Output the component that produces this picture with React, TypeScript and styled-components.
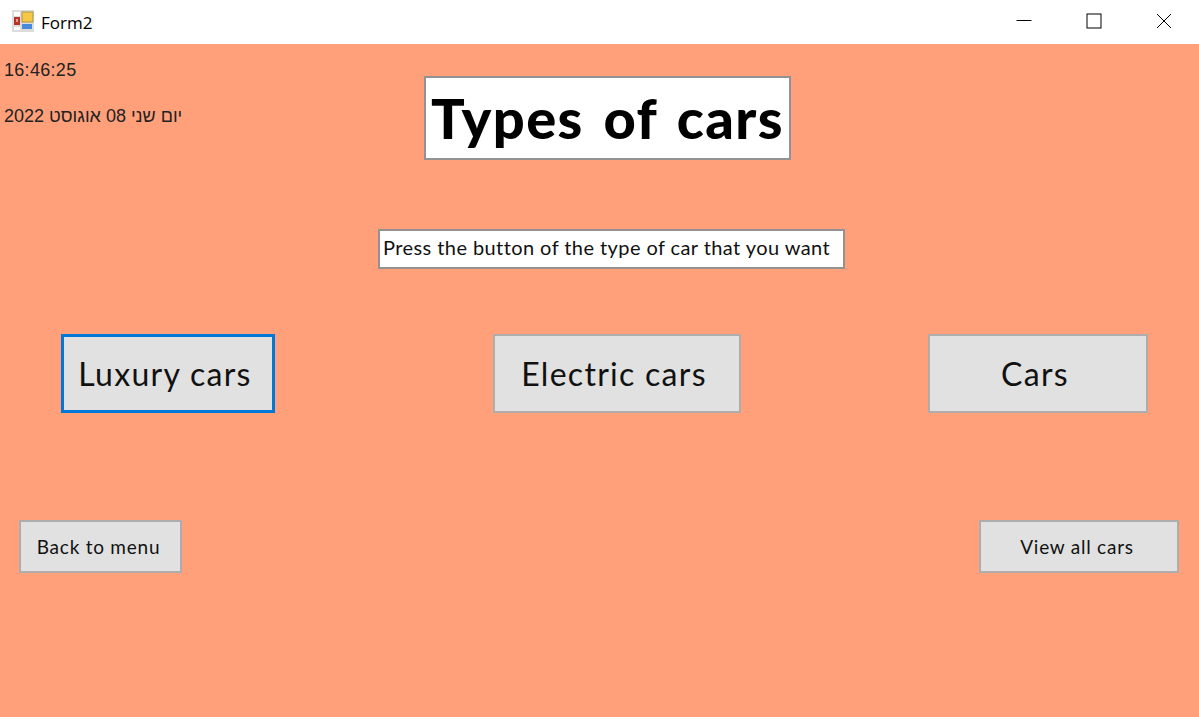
import React from "react";
import styled, { createGlobalStyle } from "styled-components";

const GlobalStyle = createGlobalStyle`
  html, body {
    margin: 0;
    padding: 0;
    background: #ffa07a;
  }
`;

const Window = styled.div`
  width: 1199px;
  height: 717px;
  overflow: hidden;
  display: flex;
  flex-direction: column;
  background: #ffa07a;
`;

const TitleBar = styled.div`
  height: 44px;
  flex: none;
  display: flex;
  align-items: center;
  background: #fff;
`;

const AppIcon = styled.svg`
  width: 22px;
  height: 22px;
  margin: -2px 0 0 12px;
`;

const WindowTitle = styled.span`
  margin-left: 7px;
  font: 17px "Open Sans", sans-serif;
  color: #000;
`;

const WindowControls = styled.div`
  margin-left: auto;
  display: flex;
`;

const ControlButton = styled.div`
  width: 70px;
  height: 44px;
  padding-bottom: 3px;
  box-sizing: border-box;
  display: flex;
  align-items: center;
  justify-content: center;
`;

const Form = styled.div`
  flex: 1;
  display: flex;
  flex-direction: column;
`;

const TopRow = styled.div`
  display: flex;
  align-items: flex-start;
`;

const ClockColumn = styled.div`
  width: 424px;
  padding: 16px 0 0 4px;
  box-sizing: border-box;
  display: flex;
  flex-direction: column;
  gap: 26px;
  font: 18px/20px "Liberation Sans", sans-serif;
  color: #222;
`;

const ClockTime = styled.span`
  letter-spacing: 0.3px;
`;

const DateLine = styled.span`
  direction: rtl;
  align-self: flex-start;
`;

const Heading = styled.h1`
  margin: 32px 0 0;
  width: 367px;
  height: 84px;
  box-sizing: border-box;
  border: 2px solid #929292;
  background: #fff;
  display: flex;
  align-items: center;
  justify-content: center;
  font: 900 56px/1 Lato, sans-serif;
  letter-spacing: 1.4px;
  word-spacing: 5px;
  color: #000;
`;

const PromptRow = styled.div`
  margin: 69px 0 0 378px;
`;

const Prompt = styled.div`
  width: 467px;
  height: 40px;
  box-sizing: border-box;
  border: 2px solid #929292;
  background: #fff;
  display: flex;
  align-items: center;
  padding: 0 0 4px 3px;
  font: 20px Lato, sans-serif;
  letter-spacing: 0.42px;
  color: #111;
  white-space: nowrap;
`;

const CarRow = styled.div`
  margin-top: 65px;
  display: flex;
`;

const Button = styled.div<{ $width: number; $height: number; $size: number; $focused?: boolean; $offset?: number }>`
  width: ${p => p.$width}px;
  height: ${p => p.$height}px;
  margin-left: ${p => p.$offset ?? 0}px;
  padding-right: ${p => Math.round(p.$size / 5)}px;
  box-sizing: border-box;
  display: flex;
  align-items: center;
  justify-content: center;
  background: #e1e1e1;
  border: ${p => (p.$focused ? "3px solid #0078d7" : "2px solid #adadad")};
  font: ${p => p.$size}px Lato, sans-serif;
  letter-spacing: 0.04em;
  color: #111;
  white-space: nowrap;
`;

const BottomRow = styled.div`
  margin-top: 107px;
  padding: 0 20px 0 19px;
  display: flex;
  justify-content: space-between;
`;

const App = () => {
  return (
    <Window>
      <GlobalStyle />
      <TitleBar>
        <AppIcon viewBox="0 0 22 22">
          <rect width="22" height="22" fill="#dcdcdc" />
          <rect x="2" y="2" width="6" height="4" fill="#fff" />
          <rect x="2" y="7" width="6" height="8" fill="#b5352a" />
          <rect x="4" y="9" width="2" height="3" fill="#e8a090" />
          <rect x="2" y="17" width="6" height="3" fill="#fff" />
          <rect x="10" y="2" width="11" height="10" fill="#f6c846" stroke="#b09440" />
          <rect x="10" y="14" width="10" height="5" fill="#4a88dc" />
        </AppIcon>
        <WindowTitle>Form2</WindowTitle>
        <WindowControls>
          <ControlButton>
            <svg width="16" height="16" viewBox="0 0 16 16">
              <path d="M0.5 7.5h15" stroke="#000" />
            </svg>
          </ControlButton>
          <ControlButton>
            <svg width="16" height="16" viewBox="0 0 16 16">
              <rect x="1" y="1" width="14" height="14" fill="none" stroke="#000" />
            </svg>
          </ControlButton>
          <ControlButton>
            <svg width="16" height="16" viewBox="0 0 16 16">
              <path d="M1 1l14 14M15 1L1 15" stroke="#000" />
            </svg>
          </ControlButton>
        </WindowControls>
      </TitleBar>
      <Form>
        <TopRow>
          <ClockColumn>
            <ClockTime>16:46:25</ClockTime>
            <DateLine>יום שני 08 אוגוסט 2022</DateLine>
          </ClockColumn>
          <Heading>Types of cars</Heading>
        </TopRow>
        <PromptRow>
          <Prompt>Press the button of the type of car that you want</Prompt>
        </PromptRow>
        <CarRow>
          <Button $width={214} $height={79} $size={32} $offset={61} $focused>
            Luxury cars
          </Button>
          <Button $width={248} $height={79} $size={32} $offset={218}>
            Electric cars
          </Button>
          <Button $width={220} $height={79} $size={32} $offset={187}>
            Cars
          </Button>
        </CarRow>
        <BottomRow>
          <Button $width={163} $height={53} $size={19}>
            Back to menu
          </Button>
          <Button $width={200} $height={53} $size={19}>
            View all cars
          </Button>
        </BottomRow>
      </Form>
    </Window>
  );
};

export default App;
